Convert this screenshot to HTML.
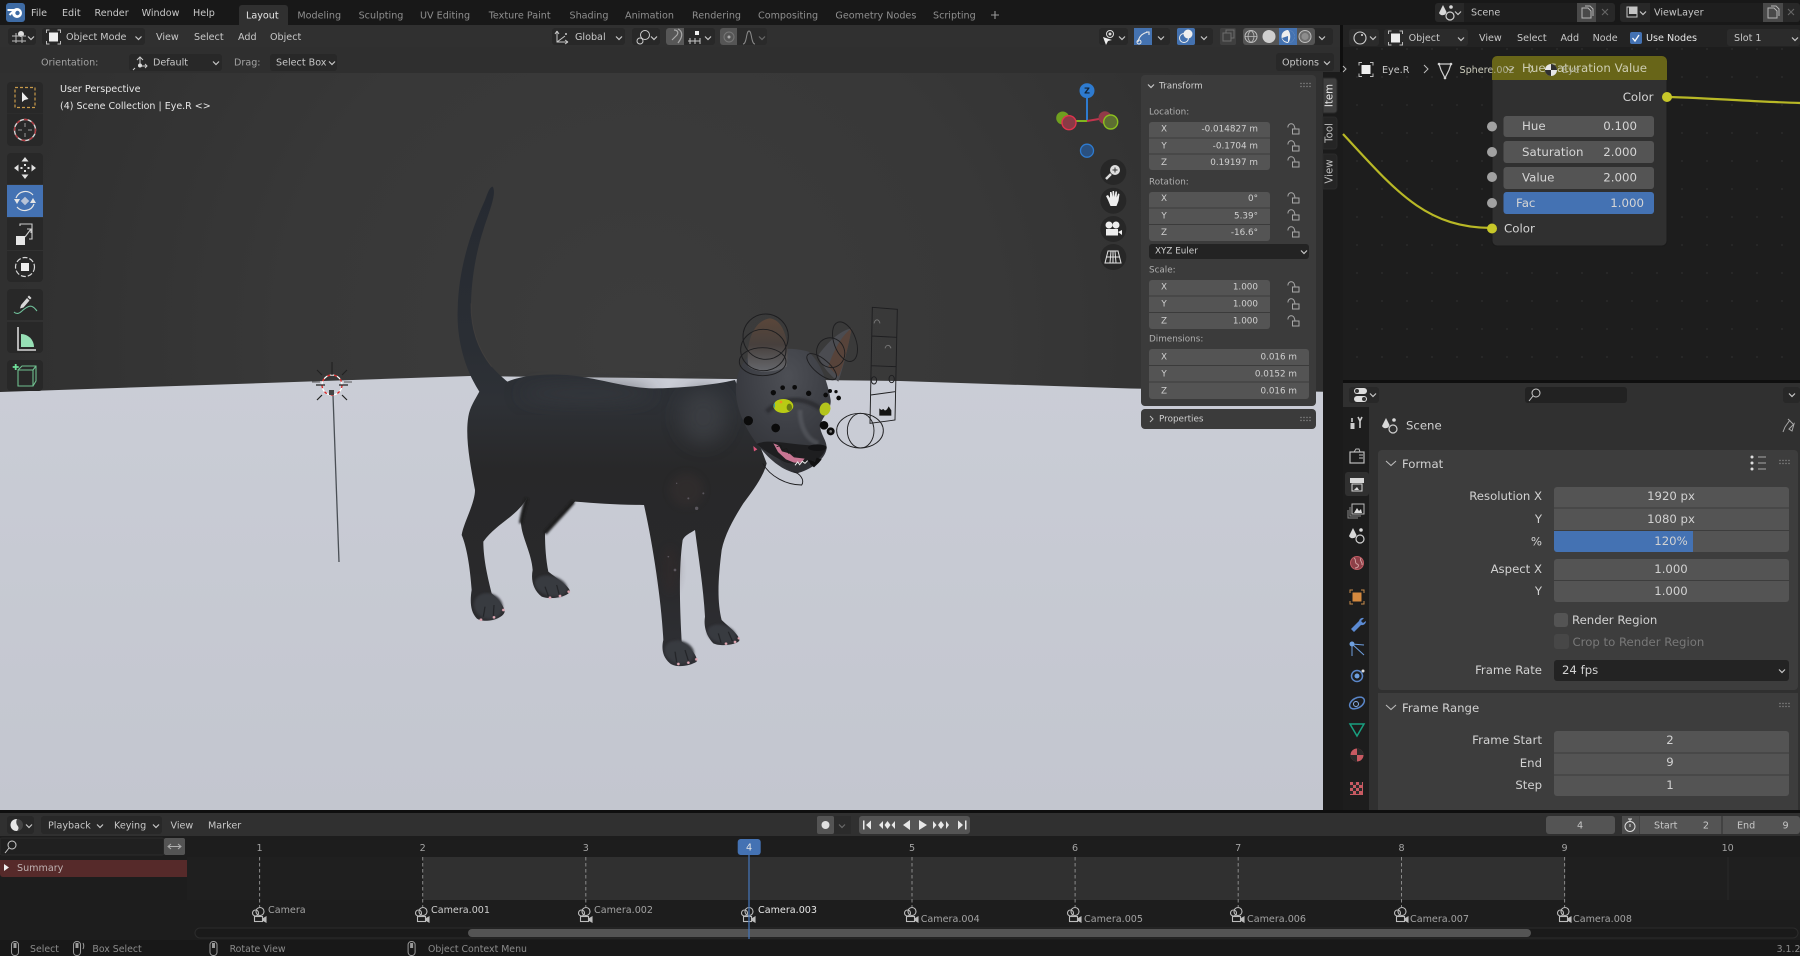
<!DOCTYPE html>
<html><head><meta charset="utf-8"><title>Blender</title>
<style>
html,body{margin:0;padding:0;background:#0f0f0f;width:1800px;height:956px;overflow:hidden}
svg{display:block;filter:blur(.35px)}
text{font-family:"DejaVu Sans","Liberation Sans",sans-serif;font-size:9.6px;fill:#c8c8c8;dominant-baseline:central;transform:translateY(.8px)}
.d{fill:#8f8f8f}.w{fill:#e6e6e6}.e{text-anchor:end}.m{text-anchor:middle}
.s{font-size:8.8px;fill:#d0d0d0}.l{font-size:8.8px;fill:#b0b0b0}
.p{font-size:11.7px;fill:#d2d2d2;transform:none}.n{font-size:11.8px;fill:#d5d5d5;transform:none}
.st{fill:#8b8b8b;font-size:9.4px}.g{fill:#a3a3a3}
</style></head><body>
<svg width="1800" height="956" viewBox="0 0 1800 956" xmlns="http://www.w3.org/2000/svg">
<defs>
<path id="ch" d="M-3 -1.5L0 1.5L3 -1.5" fill="none" stroke="#c8c8c8" stroke-width="1.2"/>
<g id="lock" fill="none" stroke="#a8a8a8" stroke-width="1"><path d="M-6 -1.5a3.2 3.2 0 0 1 6.4-1l.6 2"/><rect x="-1.5" y="0" width="6.5" height="5"/></g>
<g id="cam" fill="none" stroke="#bcbcbc" stroke-width="1.1"><circle cx="1" cy="-3.5" r="4"/><circle cx="-3.5" cy="-2" r="3"/><rect x="-4.5" y="1.5" width="8" height="5"/><path d="M3.5 4l3.500-2v5l-3.500-2" fill="#bcbcbc"/></g>
<g id="mouse" fill="none" stroke="#9a9a9a" stroke-width="1"><rect x="-3.5" y="-7" width="7" height="14" rx="3.2"/><rect x="-1" y="-5" width="2" height="4" fill="#9a9a9a"/></g>
<g id="dots" fill="#8a8a8a"><circle cx="-5" cy="-1.5" r=".7"/><circle cx="-2" cy="-1.5" r=".7"/><circle cx="1" cy="-1.5" r=".7"/><circle cx="4" cy="-1.5" r=".7"/><circle cx="-5" cy="1.5" r=".7"/><circle cx="-2" cy="1.5" r=".7"/><circle cx="1" cy="1.5" r=".7"/><circle cx="4" cy="1.5" r=".7"/></g>
<g id="obj"><path d="M-7 -4v-3h3M4 -7h3v3M7 4v3h-3M-4 7h-3v-3" fill="none" stroke="#bbb" stroke-width="1"/><rect x="-4.5" y="-4.5" width="9" height="9" fill="#eee"/></g>
<g id="scene"><path d="M-3 -8l3.500 7a4 4 0 0 1-7.500 1z" fill="#d8d8d8"/><circle cx="4" cy="3" r="4" fill="none" stroke="#d0d0d0" stroke-width="1.2"/><circle cx="5" cy="-6" r="1.8" fill="#d8d8d8"/></g>
<radialGradient id="vp" gradientUnits="userSpaceOnUse" cx="640" cy="340" r="640"><stop offset="0" stop-color="#3c3c3c"/><stop offset=".55" stop-color="#383838"/><stop offset="1" stop-color="#303030"/></radialGradient>
<linearGradient id="fl" x1="0" y1="0" x2="0" y2="1"><stop offset="0" stop-color="#cacdd6"/><stop offset="1" stop-color="#c3c6cf"/></linearGradient>
<linearGradient id="body" x1="0" y1="0" x2="0" y2="1"><stop offset="0" stop-color="#262a31"/><stop offset=".33" stop-color="#2a2e34"/><stop offset=".45" stop-color="#2e3136"/><stop offset=".59" stop-color="#282829"/><stop offset=".8" stop-color="#29292b"/><stop offset="1" stop-color="#2f3035"/></linearGradient>
<radialGradient id="head" cx=".55" cy=".22" r=".85"><stop offset="0" stop-color="#4d4f55"/><stop offset=".5" stop-color="#3d3f45"/><stop offset="1" stop-color="#2e2f33"/></radialGradient>
<linearGradient id="ear" x1="0" y1="0" x2="0" y2="1"><stop offset="0" stop-color="#5a4639"/><stop offset=".5" stop-color="#47403d"/><stop offset="1" stop-color="#66686d"/></linearGradient>
<filter id="b5" x="-80%" y="-80%" width="260%" height="260%"><feGaussianBlur stdDeviation="28"/></filter>
<filter id="b3" x="-50%" y="-50%" width="200%" height="200%"><feGaussianBlur stdDeviation="12"/></filter>
<filter id="b1" x="-30%" y="-30%" width="160%" height="160%"><feGaussianBlur stdDeviation="3"/></filter>
<pattern id="nd" x="1345" y="35" width="25" height="28" patternUnits="userSpaceOnUse"><circle cx="12" cy="14" r=".9" fill="#2e2e2e"/></pattern>
</defs>

<rect width="1800" height="956" fill="#0f0f0f"/>
<!-- top bar -->
<rect width="1800" height="25" fill="#181818"/>
<rect x="6" y="3" width="19" height="19" rx="3" fill="#3e6ba4"/>
<circle cx="17" cy="13" r="5" fill="#fff"/><circle cx="17.5" cy="13" r="2.2" fill="#3e6ba4"/><path d="M7.5 10h7l-5 5" fill="none" stroke="#fff" stroke-width="2"/>
<text x="31" y="12.5">File</text><text x="62" y="12.5">Edit</text><text x="94.5" y="12.5">Render</text><text x="141.6" y="12.5">Window</text><text x="193" y="12.5">Help</text>
<path d="M239 25v-17a3 3 0 0 1 3-3h43a3 3 0 0 1 3 3v17z" fill="#303030"/>
<text x="246" y="15" class="w">Layout</text>
<text x="297.4" y="15" class="d">Modeling</text><text x="358.6" y="15" class="d">Sculpting</text><text x="420" y="15" class="d">UV Editing</text><text x="488.7" y="15" class="d">Texture Paint</text><text x="569.5" y="15" class="d">Shading</text><text x="625" y="15" class="d">Animation</text><text x="692" y="15" class="d">Rendering</text><text x="758" y="15" class="d">Compositing</text><text x="835.4" y="15" class="d">Geometry Nodes</text><text x="933" y="15" class="d">Scripting</text>
<path d="M991 15h8M995 11v8" stroke="#999" stroke-width="1.1"/>

<!-- scene / view layer -->
<rect x="1435" y="3" width="180" height="19" rx="3" fill="#282828"/>
<rect x="1464" y="3" width="113" height="19" fill="#1e1e1e"/>
<rect x="1577" y="3" width="19" height="19" fill="#494949"/>
<use href="#scene" x="1446" y="13"/><use href="#ch" x="1458" y="13"/>
<text x="1471" y="12">Scene</text>
<path d="M1582 8h6l3 3v7h-9zM1585 6h5l3 3v7" fill="none" stroke="#b5b5b5" stroke-width="1"/>
<path d="M1602 9l6 6M1608 9l-6 6" stroke="#666" stroke-width="1.1"/>
<rect x="1620" y="3" width="180" height="19" rx="3" fill="#282828"/>
<rect x="1650" y="3" width="113" height="19" fill="#1e1e1e"/>
<rect x="1763" y="3" width="20" height="19" fill="#494949"/>
<rect x="1627" y="7" width="10" height="10" fill="none" stroke="#c5c5c5"/><rect x="1629" y="7" width="8" height="7" fill="#c5c5c5"/><use href="#ch" x="1643" y="13"/>
<text x="1654" y="12">ViewLayer</text>
<path d="M1768 8h6l3 3v7h-9zM1771 6h5l3 3v7" fill="none" stroke="#b5b5b5" stroke-width="1"/>
<path d="M1788 9l6 6M1794 9l-6 6" stroke="#666" stroke-width="1.1"/>

<!-- viewport -->
<rect x="0" y="25" width="1340" height="785" fill="url(#vp)"/>
<path d="M0 392L470 376L900 381L1130 388.500L1340 392V810H0Z" fill="url(#fl)"/>
<rect x="0" y="25" width="1340" height="22" fill="#303030"/>
<rect x="0" y="47" width="1340" height="26" fill="#2f2f2f"/>
<rect x="1323" y="72" width="20" height="738" fill="#1b1b1b"/>

<!-- header buttons -->
<g fill="#282828">
<rect x="8" y="28" width="28" height="17" rx="3"/>
<rect x="42" y="28" width="103" height="17" rx="3"/>
<rect x="552" y="28" width="73" height="17" rx="3"/>
<rect x="632" y="28" width="28" height="17" rx="3"/>
<rect x="666" y="28" width="49" height="17" rx="3"/>
<rect x="720" y="28" width="47" height="17" rx="3" fill="#2a2a2a"/>
<rect x="1099" y="28" width="29" height="17" rx="3"/>
<rect x="1134" y="28" width="36" height="17" rx="3"/>
<rect x="1177" y="28" width="36" height="17" rx="3"/>
<rect x="1243" y="28" width="90" height="17" rx="3"/>
<rect x="1276" y="53" width="58" height="18" rx="3"/>
<rect x="129" y="54" width="93" height="17" rx="3"/>
<rect x="270" y="54" width="67" height="17" rx="3"/>
</g>
<circle cx="21" cy="34" r="3" fill="#ddd"/><path d="M12 36h14M12 41h14M16 33v10M22 37v6" stroke="#bbb" stroke-width="1"/><use href="#ch" x="31" y="38"/>
<use href="#obj" x="53.500" y="37"/><text x="66" y="36.500">Object Mode</text><use href="#ch" x="138.500" y="38"/>
<text x="156" y="36.500">View</text><text x="194" y="36.500">Select</text><text x="238" y="36.500">Add</text><text x="270" y="36.500">Object</text>
<path d="M557 31v11h11M557 42l8-6M557 31l-2 3M557 31l2 3M568 42l-3-2M568 42l-3 2" fill="none" stroke="#c8c8c8" stroke-width="1"/><circle cx="566" cy="34" r="1" fill="#ccc"/>
<text x="575" y="36.500">Global</text><use href="#ch" x="619" y="38"/>
<circle cx="645" cy="35" r="4.500" fill="none" stroke="#ccc"/><circle cx="640" cy="41" r="3" fill="none" stroke="#ccc"/><use href="#ch" x="654" y="38"/>
<path d="M666 31a3 3 0 0 1 3-3h15v17h-15a3 3 0 0 1-3-3z" fill="#575757"/>
<path d="M672 40l5-5c2-3 0-5-3-5M678 43l2-3c3-5 2-9-2-11" fill="none" stroke="#a8a8a8" stroke-width="1.2"/>
<path d="M688 41h12M690 38v6M695 38v6M700 38v6" stroke="#c8c8c8" stroke-width="1"/><rect x="695" y="31" width="4" height="4" fill="#eee"/><use href="#ch" x="708" y="38"/>
<path d="M720 31a3 3 0 0 1 3-3h14v17h-14a3 3 0 0 1-3-3z" fill="#555"/><circle cx="729" cy="37" r="5" fill="none" stroke="#777"/><circle cx="729" cy="37" r="1.5" fill="#aaa"/>
<path d="M743 44c4 0 3-13 6-13s2 13 6 13" fill="none" stroke="#8b8b8b"/><use href="#ch" x="762" y="38" opacity=".4"/>
<circle cx="1110" cy="34" r="3.500" fill="none" stroke="#ddd"/><circle cx="1110" cy="34" r="1.500" fill="#ddd"/><path d="M1103 37l9 3-4 1-2 4z" fill="#eee"/><use href="#ch" x="1122" y="38"/>
<rect x="1134" y="28" width="18" height="17" fill="#4472b0"/><path d="M1138 42c1-6 5-9 10-10M1146 32h3v3" fill="none" stroke="#e8e8e8" stroke-width="1.1"/><circle cx="1139" cy="42" r="2" fill="none" stroke="#e8e8e8"/><use href="#ch" x="1161" y="38"/>
<rect x="1177" y="28" width="18" height="17" rx="2" fill="#4472b0"/><circle cx="1188" cy="34" r="4.500" fill="#eee"/><circle cx="1184" cy="38" r="4.500" fill="none" stroke="#eee"/><use href="#ch" x="1204" y="38"/>
<rect x="1220" y="28" width="16" height="17" rx="2" fill="#3f3f3f"/><path d="M1223 33h8v8h-8zM1226 33v-3h8v8h-3" fill="none" stroke="#6e6e6e"/>
<rect x="1243" y="28" width="72" height="17" rx="3" fill="#545454"/>
<circle cx="1251" cy="36.500" r="6" fill="none" stroke="#bdbdbd"/><path d="M1245 36.500h12M1251 30.500c-4 3-4 9 0 12M1251 30.500c4 3 4 9 0 12" fill="none" stroke="#bdbdbd" stroke-width=".8"/>
<circle cx="1269" cy="36.500" r="6.500" fill="#cfcfcf"/>
<rect x="1279" y="28" width="18" height="17" fill="#4472b0"/><circle cx="1288" cy="36.500" r="6.500" fill="#eee"/><path d="M1288 30a6.500 6.500 0 0 1 0 13c3-3 3-10 0-13z" fill="#4472b0"/><path d="M1282 38l6-2v6a7 7 0 0 1-6-4z" fill="#4472b0"/>
<circle cx="1305" cy="36.500" r="6" fill="#6e6e6e" stroke="#bdbdbd"/><circle cx="1305" cy="36.500" r="3.500" fill="#8d8d8d"/>
<use href="#ch" x="1322" y="38"/>
<text x="1282" y="62">Options</text><use href="#ch" x="1327" y="63"/>
<text x="41" y="62" class="g">Orientation:</text>
<path d="M140 57v9M137 60l3-3 3 3M140 66h7M133 70l2-2M145 64l2 2-2 2" fill="none" stroke="#ccc"/><circle cx="140" cy="65.500" r="2" fill="#ddd"/>
<text x="153" y="62">Default</text><use href="#ch" x="216" y="63"/>
<text x="234" y="62" class="g">Drag:</text><text x="276" y="62">Select Box</text><use href="#ch" x="332" y="63"/>

<!-- overlay text -->
<text x="60" y="88.500" class="w">User Perspective</text>
<text x="60" y="105.500" class="w" style="font-size:9.5px">(4) Scene Collection | Eye.R &lt;&gt;</text>

<!-- toolbar -->
<g fill="#282828">
<path d="M7 86a4 4 0 0 1 4-4h28a4 4 0 0 1 4 4v27.500h-36z"/>
<path d="M7 114h36v28a4 4 0 0 1-4 4h-28a4 4 0 0 1-4-4z"/>
<path d="M7 157a4 4 0 0 1 4-4h28a4 4 0 0 1 4 4v27h-36z"/>
<rect x="7" y="218" width="36" height="32"/>
<path d="M7 251h36v27a4 4 0 0 1-4 4h-28a4 4 0 0 1-4-4z"/>
<path d="M7 293a4 4 0 0 1 4-4h28a4 4 0 0 1 4 4v27h-36z"/>
<path d="M7 322h36v27a4 4 0 0 1-4 4h-28a4 4 0 0 1-4-4z"/>
<rect x="7" y="360" width="36" height="31" rx="4"/>
</g>
<rect x="7" y="185" width="36" height="32" fill="#4472b3"/>
<rect x="15" y="87.500" width="20" height="20" fill="none" stroke="#c79a4a" stroke-width="1.2" stroke-dasharray="3 2"/>
<path d="M22 92v10l2.500-2 4-1z" fill="#eee"/>
<circle cx="25" cy="130" r="10.500" fill="none" stroke="#d8d8d8" stroke-width="1.4"/><circle cx="25" cy="130" r="10.500" fill="none" stroke="#b03a40" stroke-width="1.4" stroke-dasharray="4 4"/>
<path d="M25 123v4M25 133v4M18 130h4M28 130h4" stroke="#999"/>
<g fill="#e0e0e0"><path d="M25 157l3.500 4.500h-7zM25 179l3.500-4.500h-7zM14 168l4.500-3.500v7zM36 168l-4.500-3.500v7z"/><rect x="24" y="164" width="2" height="2"/><rect x="24" y="170" width="2" height="2"/><rect x="20.500" y="167" width="2" height="2"/><rect x="27.500" y="167" width="2" height="2"/></g>
<rect x="22" y="198" width="6" height="6" fill="#b8c4d8" transform="rotate(45 25 201)"/>
<path d="M16 198a10 10 0 0 1 17-3M34 204a10 10 0 0 1-17 3" fill="none" stroke="#e6e6e6" stroke-width="1.2"/>
<path d="M14 199l3 5 3-5zM36 203l-3-5-3 5z" fill="#e6e6e6"/>
<rect x="16" y="236" width="9" height="9" fill="#e6e6e6"/><path d="M20 226v-2h12v15h-3M25 237l6-8M27 229h4v4" fill="none" stroke="#ccc" stroke-width="1.1"/>
<circle cx="25" cy="267" r="9.500" fill="none" stroke="#d8d8d8" stroke-width="1.2" stroke-dasharray="5 2"/><rect x="21" y="263" width="8" height="8" fill="#eee"/>
<path d="M21 305l6-7 2.500 2.500-6 7-3.500 1zM27.500 297l1.500-1.500 2.500 2.500-1.500 1.500z" fill="#d8d8d8"/><path d="M14 312c3 3 6 1 9-2 4-3 7-5 10-3 2 1 3 3 4 4" fill="none" stroke="#6fc09a" stroke-width="1.1"/>
<path d="M18 327v23h18" fill="none" stroke="#d8d8d8" stroke-width="1.600"/><path d="M21 347v-13a13 13 0 0 1 13 13z" fill="#97dfb5"/>
<path d="M18 370h15v16h-15zM18 370l4-4h14v15l-3 5M33 370l3-4" fill="none" stroke="#6fbf8f" stroke-width="1.100"/><path d="M15.700 364v6M12.700 367h6" stroke="#6fe09a" stroke-width="1.800"/>

<!-- empty -->
<g fill="none">
<path d="M333 395L339 562" stroke="#4a4f55" stroke-width="1.3"/>
<circle cx="332" cy="385" r="10" stroke="#fff" stroke-width="1.300"/>
<circle cx="332" cy="385" r="10" stroke="#d82020" stroke-width="1.300" stroke-dasharray="3 4"/>
<path d="M316 385h9M339 385h9M332 362v13M322 395l-5 5M342 395l5 5M322 375l-5-5M342 375l5-5" stroke="#222" stroke-width="1.200"/>
<path d="M312 382h8M344 382h8" stroke="#555"/><rect x="329" y="390" width="5" height="5" fill="#444"/>
</g>

<!-- cat -->
<g transform="translate(420 170) scale(.33333)">
<path fill="url(#body)" d="M218 50C232 70 205 130 190 180C170 240 155 320 153 400C152 480 175 540 215 590C235 612 250 625 262 635C300 618 370 610 440 615C530 622 620 655 700 655C780 655 880 645 945 630L1040 880C1030 920 1000 960 970 1000C945 1040 915 1090 905 1140C895 1220 890 1290 905 1350C925 1370 960 1395 958 1412C950 1425 900 1430 880 1420C860 1400 850 1370 855 1340C850 1250 835 1160 825 1080C810 1090 795 1095 788 1110C775 1200 780 1320 785 1415C810 1430 835 1460 830 1475C810 1488 770 1495 750 1480C725 1460 725 1430 730 1410C725 1300 700 1130 672 1005C600 1005 530 1000 465 995C440 1020 400 1060 375 1090C375 1130 378 1170 385 1205C410 1225 450 1250 450 1265C440 1282 390 1290 365 1280C340 1260 332 1230 338 1200C335 1150 305 1100 303 1060C305 1040 312 1010 320 985C290 1040 230 1060 190 1115C190 1170 205 1230 215 1270C240 1290 260 1320 252 1330C240 1350 190 1360 170 1345C150 1325 150 1290 155 1260C150 1190 140 1130 125 1095C130 1060 165 1000 165 960C150 880 135 800 145 740C150 710 165 690 178 665C130 590 110 500 113 420C115 300 150 190 195 90C203 70 208 52 218 50Z"/>
<path d="M153 400C152 480 175 540 215 590" fill="none" stroke="#4d4842" stroke-width="3" opacity=".45"/>
<ellipse cx="850" cy="740" rx="70" ry="80" fill="#3d3f45" filter="url(#b5)" opacity=".8"/>
<ellipse cx="500" cy="670" rx="200" ry="25" fill="#383b41" filter="url(#b5)" opacity=".7"/>
<ellipse cx="800" cy="960" rx="50" ry="50" fill="#3a3033" filter="url(#b3)" opacity=".4"/>
<ellipse cx="750" cy="1200" rx="25" ry="70" fill="#352c2c" filter="url(#b3)" opacity=".4"/>
<path d="M460 995C440 1020 400 1060 375 1090M320 985C310 1020 305 1040 303 1060" fill="none" stroke="#1b1c1e" stroke-width="12" filter="url(#b1)"/>
<!-- paws -->
<g fill="#393a40" filter="url(#b1)">
<ellipse cx="205" cy="1308" rx="44" ry="38" transform="rotate(20 205 1308)"/>
<ellipse cx="393" cy="1248" rx="50" ry="30" transform="rotate(15 393 1248)"/>
<ellipse cx="778" cy="1446" rx="45" ry="34" transform="rotate(15 778 1446)"/>
<ellipse cx="905" cy="1392" rx="44" ry="27" transform="rotate(15 905 1392)"/>
</g>
<g fill="none" stroke="#202124" stroke-width="3"><path d="M195 1310l-5 30M222 1305l-2 32M375 1250l10 28M410 1245l8 30M765 1445l5 32M795 1440l10 32M895 1390l8 28M925 1385l12 28"/></g>
<g fill="#dfa6b2"><circle cx="183" cy="1349" r="4"/><circle cx="222" cy="1342" r="4"/><circle cx="250" cy="1320" r="4"/><circle cx="390" cy="1283" r="4"/><circle cx="420" cy="1278" r="4"/><circle cx="446" cy="1265" r="4"/><circle cx="775" cy="1482" r="4"/><circle cx="805" cy="1478" r="4"/><circle cx="829" cy="1468" r="4"/><circle cx="918" cy="1421" r="4"/><circle cx="945" cy="1416" r="4"/><circle cx="956" cy="1405" r="3.500"/></g>
<!-- speckles -->
<g fill="#8a8490" opacity=".5"><circle cx="830" cy="1015" r="5"/><circle cx="805" cy="985" r="3"/><circle cx="850" cy="970" r="3"/><circle cx="770" cy="940" r="2"/><circle cx="765" cy="1200" r="4"/><circle cx="745" cy="1160" r="2.500"/></g>
<!-- head -->
<path fill="url(#head)" d="M948 650C950 610 965 580 985 560C1040 535 1120 530 1165 545C1195 570 1220 620 1232 690C1235 720 1205 740 1200 770C1205 800 1220 810 1220 835C1215 870 1170 900 1130 910C1080 900 1040 860 1010 820C965 760 945 700 948 650Z"/>
<!-- ears -->
<path fill="url(#ear)" d="M985 590C975 510 1005 450 1050 445C1090 450 1110 510 1100 590C1060 610 1010 610 985 590Z"/>
<path fill="#4b4c51" d="M1195 555C1220 520 1260 480 1295 475C1285 530 1270 590 1255 635C1230 615 1205 590 1195 555Z"/>
<path fill="#57433a" d="M1225 590C1240 540 1270 490 1295 475C1285 530 1270 590 1255 620Z"/>
<path d="M1040 725C1090 680 1150 680 1200 715" stroke="#25272a" stroke-width="14" fill="none" filter="url(#b1)" opacity=".7"/>
<path d="M1140 720C1140 770 1160 810 1195 820" stroke="#6a6d73" stroke-width="14" fill="none" filter="url(#b1)" opacity=".4"/>
<!-- eyes -->
<ellipse cx="1090" cy="708" rx="30" ry="21" fill="#b9cb14"/><path d="M1060 705l5-8v20z" fill="#3f9aa0"/>
<ellipse cx="1108" cy="712" rx="8" ry="11" fill="#6a7b12"/><circle cx="1083" cy="696" r="4" fill="#f09020"/>
<ellipse cx="1215" cy="717" rx="16" ry="20" fill="#b3c41c" transform="rotate(20 1215 717)"/>
<!-- mouth -->
<path fill="#1e1e20" d="M1010 822C1040 806 1100 822 1170 826L1220 828C1212 860 1190 870 1170 880L1100 880C1065 860 1035 845 1010 822Z"/>
<path fill="#2e2f33" d="M1075 865C1100 885 1130 885 1180 872C1170 890 1150 905 1130 910C1110 905 1090 885 1075 865Z"/>
<path fill="#c77592" d="M1060 820l16 6 10 18 22 6 14 12 32 4-10 12-22 0-24-10-24-22z"/>
<path fill="none" stroke="#1a1a1a" stroke-width="3" d="M1070 830l12-4 4 14 14-4 6 14 16-4 4 12"/>
<path fill="none" stroke="#e8e8e8" stroke-width="3" d="M1125 886l8-10 6 8 8-10 8 6 8-8"/>
<path fill="#d9557a" d="M1000 828l12 10-10 6z"/>
<path fill="#111" d="M1165 870l20 5 5-12 15 5-8 10-15 14-10-8z"/>
<ellipse cx="1192" cy="833" rx="28" ry="10" fill="#141416"/>
<!-- dots -->
<g fill="#0b0b0b"><circle cx="1060" cy="668" r="8"/><circle cx="1088" cy="653" r="7"/><circle cx="1124" cy="652" r="7"/><circle cx="1166" cy="670" r="8"/><circle cx="1217" cy="675" r="7"/><circle cx="1230" cy="663" r="6"/><circle cx="1248" cy="665" r="5"/><circle cx="1256" cy="684" r="7"/><circle cx="985" cy="752" r="14"/><circle cx="1067" cy="774" r="13"/><circle cx="1212" cy="766" r="13"/><circle cx="1232" cy="784" r="12"/></g>
<circle cx="1232" cy="784" r="4" fill="#777"/>
<!-- wires -->
<g fill="none" stroke="#1e1e20" stroke-width="2.800">
<circle cx="1037" cy="500" r="68"/><ellipse cx="1030" cy="540" rx="68" ry="62"/><ellipse cx="1028" cy="575" rx="70" ry="42"/>
<ellipse cx="1275" cy="515" rx="33" ry="62" transform="rotate(-20 1275 515)"/>
<ellipse cx="1232" cy="548" rx="42" ry="45" transform="rotate(-20 1232 548)"/>
<ellipse cx="1205" cy="590" rx="55" ry="22" transform="rotate(40 1205 590)"/>
<ellipse cx="1320" cy="782" rx="70" ry="52"/><ellipse cx="1322" cy="782" rx="40" ry="52"/>
<path d="M1028 880C1050 920 1100 945 1145 945C1155 930 1140 910 1120 905"/>
<path d="M1357 412L1432 418L1425 750L1350 760ZM1355 498L1430 502M1353 587L1428 590M1352 675L1425 665"/>
<path d="M1362 460c4-14 14-14 18 0M1395 535c4-12 14-12 18 0" stroke="#777"/>
<ellipse cx="1362" cy="631" rx="8" ry="11"/><ellipse cx="1415" cy="627" rx="8" ry="11"/>
</g>
<path d="M1378 715l6 5 6-3 5 5 6-4 5-9 8 12v16h-36z" fill="#141414"/>
</g>

<!-- gizmo -->
<path d="M1087 121V97" stroke="#2e7bd0" stroke-width="2"/>
<path d="M1087 121L1066 121" stroke="#7fb51e" stroke-width="2"/><path d="M1087 121L1105 118" stroke="#c2344d" stroke-width="2"/>
<circle cx="1087" cy="90.700" r="7.500" fill="#2e7bd0"/><text x="1087" y="90" class="m" style="font-size:8px;font-weight:bold;fill:#123">Z</text>
<circle cx="1087" cy="150.700" r="6.500" fill="#2a507f" stroke="#2e7bd0" stroke-width="1.300"/>
<circle cx="1062.700" cy="118" r="6.500" fill="#6f9f1f"/>
<circle cx="1069" cy="122.700" r="7" fill="#8a3a46" stroke="#e0334d" stroke-width="1.400"/>
<circle cx="1105" cy="117.700" r="6.500" fill="#933a48"/>
<circle cx="1110.700" cy="122" r="7" fill="#5d6e32" stroke="#8abf1e" stroke-width="1.400"/>

<!-- nav buttons -->
<g fill="#272727"><circle cx="1113.300" cy="172" r="13"/><circle cx="1113.300" cy="200.700" r="13"/><circle cx="1113.300" cy="229" r="13"/><circle cx="1113.300" cy="257" r="13"/></g>
<circle cx="1115" cy="170" r="5" fill="#ddd"/><path d="M1111 174l-5 5" stroke="#ddd" stroke-width="2.500"/><path d="M1115 167.500v5M1112.500 170h5" stroke="#333"/>
<path d="M1108 200l-2-4 2-1 2 3v-6h1.500l1 5v-6h1.500l.5 6 1-5.500h1.500l-.3 6 1.500-4 1.300.5-1 7-2 5h-6z" fill="#eee"/>
<circle cx="1109" cy="225" r="3.500" fill="#eee"/><circle cx="1116" cy="225" r="3.500" fill="#eee"/><rect x="1106" y="229" width="12" height="6.500" fill="#eee"/><path d="M1118 232l4-2v5z" fill="#eee"/>
<path d="M1108 251h10l3 12h-16zM1113 251v12M1106 257h14M1111 251l-1 12M1115 251l1 12" fill="none" stroke="#e4e4e4" stroke-width="1"/>

<!-- sidebar panels -->
<rect x="1141" y="75" width="175" height="331" rx="4" fill="#3b3b3b"/>
<rect x="1141" y="409" width="175" height="20" rx="4" fill="#3b3b3b"/>
<use href="#ch" x="1151" y="86"/><text x="1159" y="85.500" class="s">Transform</text><use href="#dots" x="1306" y="85"/>
<path d="M1150 416l3 3-3 3" fill="none" stroke="#bbb"/><text x="1159" y="418.500" class="s">Properties</text><use href="#dots" x="1306" y="419"/>
<g fill="#545454">
<rect x="1149" y="122" width="121" height="48" rx="3"/><rect x="1149" y="192" width="121" height="49" rx="3"/><rect x="1149" y="280" width="121" height="49" rx="3"/><rect x="1149" y="349" width="160" height="50" rx="3"/>
</g>
<path d="M1149 138h121M1149 154h121M1149 208h121M1149 224.500h121M1149 296h121M1149 312.500h121M1149 365.500h160M1149 382h160" stroke="#3b3b3b"/>
<text x="1149" y="111.500" class="l">Location:</text><text x="1149" y="181.500" class="l">Rotation:</text><text x="1149" y="269.500" class="l">Scale:</text><text x="1149" y="338.500" class="l">Dimensions:</text>
<g class="s">
<text x="1164" y="128.500" class="s m">X</text><text x="1164" y="145.500" class="s m">Y</text><text x="1164" y="162" class="s m">Z</text>
<text x="1164" y="198" class="s m">X</text><text x="1164" y="215.500" class="s m">Y</text><text x="1164" y="232" class="s m">Z</text>
<text x="1164" y="286.500" class="s m">X</text><text x="1164" y="303.500" class="s m">Y</text><text x="1164" y="320.500" class="s m">Z</text>
<text x="1164" y="356.500" class="s m">X</text><text x="1164" y="373.500" class="s m">Y</text><text x="1164" y="390.500" class="s m">Z</text>
<text x="1258" y="128.500" class="s e">-0.014827 m</text><text x="1258" y="145.500" class="s e">-0.1704 m</text><text x="1258" y="162" class="s e">0.19197 m</text>
<text x="1258" y="198" class="s e">0°</text><text x="1258" y="215.500" class="s e">5.39°</text><text x="1258" y="232" class="s e">-16.6°</text>
<text x="1258" y="286.500" class="s e">1.000</text><text x="1258" y="303.500" class="s e">1.000</text><text x="1258" y="320.500" class="s e">1.000</text>
<text x="1297" y="356.500" class="s e">0.016 m</text><text x="1297" y="373.500" class="s e">0.0152 m</text><text x="1297" y="390.500" class="s e">0.016 m</text>
</g>
<rect x="1149" y="244" width="160" height="15" rx="3" fill="#232323"/><text x="1155" y="250.500" class="s">XYZ Euler</text><use href="#ch" x="1304" y="252"/>
<use href="#lock" x="1294" y="129"/><use href="#lock" x="1294" y="146"/><use href="#lock" x="1294" y="162"/><use href="#lock" x="1294" y="198"/><use href="#lock" x="1294" y="215"/><use href="#lock" x="1294" y="232"/><use href="#lock" x="1294" y="287"/><use href="#lock" x="1294" y="304"/><use href="#lock" x="1294" y="321"/>

<!-- n tabs -->
<g fill="#3a3a3a" stroke="#2a2a2a"><path d="M1323 78h11a3 3 0 0 1 3 3v29a3 3 0 0 1-3 3h-11z" fill="#3f3f3f"/><path d="M1323 117h11a3 3 0 0 1 3 3v26a3 3 0 0 1-3 3h-11z" fill="#252525"/><path d="M1323 154h11a3 3 0 0 1 3 3v29a3 3 0 0 1-3 3h-11z" fill="#252525"/></g>
<g transform="translate(1330 95.500) rotate(-90)"><text class="m w" style="font-size:10.200px;transform:none">Item</text></g>
<g transform="translate(1330 133) rotate(-90)"><text class="m" style="font-size:10.200px;fill:#bdbdbd;transform:none">Tool</text></g>
<g transform="translate(1330 171.500) rotate(-90)"><text class="m" style="font-size:10.200px;fill:#bdbdbd;transform:none">View</text></g>

<!-- node editor -->
<rect x="1343" y="25" width="457" height="355" fill="#1d1d1d"/>
<rect x="1343" y="47" width="457" height="333" fill="url(#nd)"/>
<rect x="1343" y="25" width="457" height="22" fill="#232323"/>
<g fill="#2b2b2b">
<rect x="1349" y="29" width="30" height="17" rx="3"/><rect x="1384" y="29" width="84" height="17" rx="3"/><rect x="1727" y="29" width="73" height="17" rx="3"/>
</g>
<circle cx="1360" cy="38" r="6" fill="none" stroke="#d0d0d0" stroke-width="1.100"/><circle cx="1362" cy="35" r="1" fill="#ddd"/><use href="#ch" x="1373" y="38"/>
<use href="#obj" x="1395.500" y="38"/><text x="1408.600" y="37.500">Object</text><use href="#ch" x="1461" y="39"/>
<text x="1479" y="37.500">View</text><text x="1517" y="37.500">Select</text><text x="1560.500" y="37.500">Add</text><text x="1592.600" y="37.500">Node</text>
<rect x="1630" y="32" width="12" height="12" rx="2" fill="#4472b3"/><path d="M1632.500 38l2.500 3 4-6" fill="none" stroke="#fff" stroke-width="1.300"/>
<text x="1646" y="37.500" class="w">Use Nodes</text><text x="1734" y="37.500">Slot 1</text><use href="#ch" x="1795" y="39"/>
<!-- breadcrumbs -->
<path d="M1343 66l3 3-3 3M1424 65l4 4-4 4" fill="none" stroke="#bdbdbd" stroke-width="1"/>
<use href="#obj" x="1366" y="69.500"/><text x="1382" y="69.500">Eye.R</text>
<path d="M1439 64h12l-2 6-4 8-4-8z" fill="none" stroke="#d0d0d0" stroke-width="1.200"/>
<circle cx="1439" cy="64" r="1.300" fill="#d0d0d0"/><circle cx="1451" cy="64" r="1.300" fill="#d0d0d0"/><circle cx="1445" cy="78" r="1.300" fill="#d0d0d0"/>
<text x="1459.500" y="69.500">Sphere.002</text>
<!-- noodles -->
<path d="M1343 134C1395 190 1425 228 1492 228" fill="none" stroke="#b8b826" stroke-width="2.200"/>
<path d="M1667 97C1710 98 1760 102 1800 103" fill="none" stroke="#b8b826" stroke-width="2.200"/>
<!-- node -->
<rect x="1492" y="56" width="175" height="190" rx="5" fill="#303030" stroke="#1a1a1a"/>
<path d="M1492 80v-19a5 5 0 0 1 5-5h165a5 5 0 0 1 5 5v19z" fill="#686518"/>
<text x="1459.500" y="69.500" style="fill:#b8b8a5;opacity:.85">Sphere.002</text>
<path d="M1506 67l4 3.500 4-3.500M1530 65l3 4-3 4" fill="none" stroke="#c8c8b0"/>
<text x="1522" y="68" class="n" style="fill:#cdcdb2">Hue Saturation Value</text>
<circle cx="1551" cy="70" r="6" fill="#e6e6e6"/><path d="M1551 64a6 6 0 0 1 6 6h-6v6a6 6 0 0 1-6-6h6z" fill="#303030"/>
<text x="1562" y="69.500" style="fill:#a8a890">Eye</text>
<text x="1653.500" y="97" class="n e">Color</text>
<circle cx="1667" cy="97" r="5" fill="#c7c729"/>
<g fill="#545454"><rect x="1503.500" y="116" width="150.500" height="21" rx="3"/><rect x="1503.500" y="141" width="150.500" height="22" rx="3"/><rect x="1503.500" y="167" width="150.500" height="22" rx="3"/></g>
<rect x="1503.500" y="192" width="150.500" height="22" rx="3" fill="#4472b3"/>
<text x="1522" y="126" class="n">Hue</text><text x="1522" y="152" class="n">Saturation</text><text x="1522" y="177.500" class="n">Value</text><text x="1516" y="203" class="n w">Fac</text>
<text x="1637" y="126" class="n e">0.100</text><text x="1637" y="152" class="n e">2.000</text><text x="1637" y="177.500" class="n e">2.000</text><text x="1644" y="203" class="n e w">1.000</text>
<text x="1504" y="228.500" class="n">Color</text>
<g fill="#a1a1a1"><circle cx="1492" cy="126.500" r="5"/><circle cx="1492" cy="152" r="5"/><circle cx="1492" cy="177" r="5"/><circle cx="1492" cy="203" r="5"/></g>
<circle cx="1492" cy="228.500" r="5" fill="#c7c729"/>

<!-- properties -->
<rect x="1343" y="383" width="457" height="427" fill="#303030"/>
<rect x="1349" y="387" width="30" height="16" rx="3" fill="#282828"/>
<rect x="1354" y="388" width="13" height="6" rx="3" fill="#ddd"/><rect x="1354" y="396" width="13" height="6" rx="3" fill="#ddd"/><circle cx="1357" cy="391" r="2" fill="#333"/><circle cx="1364" cy="399" r="2" fill="#333"/><use href="#ch" x="1373" y="395"/>
<rect x="1525" y="387" width="102" height="16" rx="3" fill="#222"/>
<circle cx="1536" cy="393" r="4" fill="none" stroke="#ccc"/><path d="M1533 396l-4 5" stroke="#ccc"/>
<rect x="1783" y="387" width="17" height="16" rx="3" fill="#282828"/><use href="#ch" x="1792" y="395"/>
<rect x="1343" y="407" width="26" height="403" fill="#1d1d1d"/>
<rect x="1345" y="472" width="24" height="24" rx="3" fill="#303030"/>
<!-- tab icons -->
<path d="M1352 418v4M1362 417l-2 4v7M1358 417l2 4" stroke="#ccc" stroke-width="1.600" fill="none"/><rect x="1350.500" y="423" width="4" height="6" fill="#ccc"/>
<rect x="1350" y="452" width="14" height="11" fill="none" stroke="#bbb" stroke-width="1.200"/><path d="M1354 452l2-3h3l1 3M1359 455h4M1359 458h4" stroke="#bbb" fill="none"/>
<rect x="1350" y="478" width="14" height="5" fill="#d8d8d8"/><rect x="1352" y="484" width="10" height="7" fill="none" stroke="#d8d8d8"/><path d="M1354 490l3-3 2 3z" fill="#d8d8d8"/>
<rect x="1352" y="504" width="12" height="10" fill="none" stroke="#bbb"/><path d="M1350 507v9h11M1348 510v8h10" stroke="#888" fill="none"/><path d="M1354 513l3-5 2 3 2-2 1 4z" fill="#ddd"/>
<use href="#scene" x="1356" y="536"/>
<circle cx="1357" cy="563" r="6.500" fill="#8d4048" stroke="#c05a62"/><path d="M1354 558c3 2 0 5 3 6s1 4-2 4M1361 558c-2 3 2 4 1 7" stroke="#d0a0a0" fill="none"/>
<path d="M1350 593v-3h3M1361 590h3v3M1364 601v3h-3M1353 604h-3v-3" fill="none" stroke="#c78a4a"/><rect x="1352.500" y="592.500" width="9" height="9" fill="#d68a3f"/>
<path d="M1351 629l8-8a4 4 0 0 1 5-3l-3 3 2 2 3-2a4 4 0 0 1-5 4l-7 7z" fill="#5b8ad2"/>
<circle cx="1352" cy="644" r="2.500" fill="#6ea0e0"/><path d="M1352 644l12 1M1352 644l12 11M1352 644v12" stroke="#6ea0e0" fill="none"/>
<circle cx="1357" cy="676" r="5.500" fill="none" stroke="#5a86c8" stroke-width="1.500"/><circle cx="1357" cy="676" r="2.500" fill="#6ea0e0"/><circle cx="1363" cy="671" r="1.500" fill="#ddd"/>
<ellipse cx="1357" cy="703" rx="8" ry="5" transform="rotate(-30 1357 703)" fill="none" stroke="#5a86c8" stroke-width="1.500"/><circle cx="1356" cy="704" r="2.500" fill="none" stroke="#8ab0e8"/>
<path d="M1350 724h14l-7 12z" fill="none" stroke="#19a080" stroke-width="1.500"/>
<circle cx="1357" cy="755" r="6.500" fill="#c85a62"/><path d="M1357 748.500a6.500 6.500 0 0 1 6.500 6.500h-6.500v6.500a6.500 6.500 0 0 1-6.500-6.500h6.500z" fill="#2a2a2a"/>
<rect x="1350" y="782" width="13" height="13" fill="#c85a62"/><path d="M1350 785h3v3h-3zM1356 785h3v3h-3zM1353 788h3v3h-3zM1359 788h3v3h-3zM1350 791h3v3h-3zM1356 791h3v3h-3zM1353 782h3v3h-3zM1359 782h3v3h-3z" fill="#2a2a2a"/>

<use href="#scene" x="1389" y="426"/><text x="1406" y="425.500" class="p">Scene</text>
<path d="M1785 427l-2 5M1788 419l6 6M1785 427l5-7M1789 429l5-5-2 7z" stroke="#a8a8a8" fill="none"/>

<rect x="1378" y="450" width="420" height="240" rx="4" fill="#3d3d3d"/>
<rect x="1378" y="693" width="420" height="117" fill="#3d3d3d"/>
<path d="M1386 461l5 4.500 5-4.500" fill="none" stroke="#bbb" stroke-width="1.100"/>
<text x="1402" y="464" class="p">Format</text>
<circle cx="1752" cy="457" r="1.500" fill="#ddd"/><circle cx="1752" cy="463" r="1.500" fill="#ddd"/><circle cx="1752" cy="469" r="1.500" fill="#ddd"/><path d="M1758 457h8M1758 463h8M1758 469h8" stroke="#a8a8a8"/>
<use href="#dots" x="1785" y="462"/>
<g fill="#545454">
<rect x="1554" y="487" width="235" height="65" rx="3"/><rect x="1554" y="559" width="235" height="43" rx="3"/><rect x="1554" y="731" width="235" height="65" rx="3"/>
</g>
<path d="M1554 531h139v21h-136a3 3 0 0 1-3-3z" fill="#4472b3"/>
<path d="M1554 508h235M1554 530.500h235M1554 580.500h235M1554 753h235M1554 775h235" stroke="#3d3d3d"/>
<g>
<text x="1542" y="496" class="p e">Resolution X</text><text x="1542" y="519" class="p e">Y</text><text x="1542" y="541.500" class="p e">%</text>
<text x="1542" y="569" class="p e">Aspect X</text><text x="1542" y="591" class="p e">Y</text>
<text x="1542" y="670" class="p e">Frame Rate</text>
<text x="1671" y="496" class="p m">1920 px</text><text x="1671" y="519" class="p m">1080 px</text><text x="1671" y="541" class="p m">120%</text>
<text x="1671" y="569" class="p m">1.000</text><text x="1671" y="591" class="p m">1.000</text>
</g>
<rect x="1554" y="613" width="14" height="14" rx="3" fill="#545454"/><text x="1572" y="620" class="p">Render Region</text>
<rect x="1554" y="634" width="15" height="15" rx="3" fill="#474747"/><text x="1572.500" y="642" class="p" style="fill:#787878">Crop to Render Region</text>
<rect x="1554" y="660" width="235" height="21" rx="3" fill="#232323"/><text x="1562" y="670" class="p">24 fps</text><use href="#ch" x="1782" y="671"/>
<path d="M1386 705l5 4.500 5-4.500" fill="none" stroke="#bbb" stroke-width="1.100"/>
<text x="1402" y="708" class="p">Frame Range</text><use href="#dots" x="1785" y="705"/>
<text x="1542" y="740" class="p e" style="font-size:11.9px">Frame Start</text><text x="1542" y="763" class="p e">End</text><text x="1542" y="785" class="p e">Step</text>
<text x="1670" y="740" class="p m">2</text><text x="1670" y="762" class="p m">9</text><text x="1670" y="785" class="p m">1</text>

<!-- timeline -->
<rect x="0" y="813" width="1800" height="23" fill="#303030"/>
<rect x="0" y="836" width="1800" height="104" fill="#1d1d1d"/>
<rect x="7" y="816" width="27" height="18" rx="3" fill="#282828"/>
<circle cx="16.500" cy="825" r="6" fill="#e6e6e6"/><path d="M17 819a6 6 0 0 1 0 12c2-2 2-4 0-6-1-2-1-4 0-6z" fill="#444"/><use href="#ch" x="29" y="826"/>
<rect x="41" y="816" width="121" height="18" rx="3" fill="#282828"/>
<text x="48" y="825">Playback</text><use href="#ch" x="100" y="826"/><text x="114" y="825">Keying</text><use href="#ch" x="156" y="826"/>
<text x="170.500" y="825">View</text><text x="208" y="825">Marker</text>
<rect x="817" y="816" width="17" height="18" rx="2" fill="#545454"/><circle cx="825.500" cy="825" r="4" fill="#e0e0e0"/><rect x="834" y="816" width="17" height="18" fill="#2b2b2b"/><use href="#ch" x="842" y="826" opacity=".4"/>
<rect x="859" y="816" width="111" height="18" rx="3" fill="#545454"/>
<g fill="#e8e8e8">
<rect x="863" y="820.500" width="1.500" height="9"/><path d="M871 820.500v9l-5-4.500z"/>
<path d="M881 825l4-4v8zM886.500 825l3-4 3 4-3 4zM897 821v8l-3.500-4z" transform="translate(-2 0)"/>
<path d="M910 820v10l-7-5z"/>
<path d="M919 820v10l8-5z"/>
<path d="M938 821l3.500 4-3.500 4zM943 825l3-4 3 4-3 4zM951 821v8l3-4z" transform="translate(-5 0)"/>
<path d="M958 820.500l5 4.500-5 4.500z"/><rect x="965" y="820.500" width="1.500" height="9"/>
</g>
<rect x="1546" y="816" width="69" height="18" rx="3" fill="#545454"/><text x="1580" y="825" class="m">4</text>
<rect x="1622" y="816" width="178" height="18" rx="3" fill="#545454"/><path d="M1639 816v18M1722 816v18" stroke="#303030"/><rect x="1622" y="816" width="17" height="18" fill="#4d4d4d"/>
<circle cx="1630" cy="826.500" r="5" fill="none" stroke="#ddd"/><path d="M1630 824v3M1628 819h4M1630 819v3" stroke="#ddd"/>
<text x="1654" y="825">Start</text><text x="1709" y="825" class="e">2</text><text x="1737" y="825">End</text><text x="1788.600" y="825" class="e">9</text>

<!-- channel list -->
<rect x="0" y="838" width="164" height="17" rx="2" fill="#202020" stroke="#2b2b2b"/>
<circle cx="12" cy="845" r="4" fill="none" stroke="#ccc"/><path d="M9 848l-4 5" stroke="#ccc"/>
<rect x="164" y="838" width="21" height="17" rx="2" fill="#545454"/><path d="M169 846.500h11M171 844l-3 2.500 3 2.500M178 844l3 2.500-3 2.500" fill="none" stroke="#b0b0b0"/>
<path d="M0 860H187V877H3a3 3 0 0 1-3-3z" fill="#562a2a"/><path d="M4 864l5 3.500-5 3.500z" fill="#eee"/><text x="17" y="867.500" style="fill:#bfb3b3">Summary</text>

<!-- range -->
<rect x="423" y="857" width="1142" height="43" fill="#303030"/>
<rect x="187" y="857" width="236" height="43" fill="#1f1f1f"/>
<rect x="1565" y="857" width="235" height="43" fill="#1f1f1f"/>
<path d="M1728 857v43" stroke="#292929"/>
<g stroke="#8a8a8a" stroke-dasharray="3.500 2.500" stroke-width="1">
<path d="M259.600 857v50M422.700 857v50M585.800 857v50M912 857v50M1075.100 857v50M1238.200 857v50M1401.500 857v50M1564.600 857v50"/>
</g>
<g class="r">
<text x="259.600" y="847.500" class="m g">1</text><text x="422.700" y="847.500" class="m g">2</text><text x="585.800" y="847.500" class="m g">3</text><text x="912" y="847.500" class="m g">5</text><text x="1075.100" y="847.500" class="m g">6</text><text x="1238.200" y="847.500" class="m g">7</text><text x="1401.500" y="847.500" class="m g">8</text><text x="1564.600" y="847.500" class="m g">9</text><text x="1727.700" y="847.500" class="m g">10</text>
</g>
<use href="#cam" x="259" y="915"/><use href="#cam" x="422" y="915"/><use href="#cam" x="585" y="915"/><use href="#cam" x="748" y="915"/><use href="#cam" x="911" y="915"/><use href="#cam" x="1074" y="915"/><use href="#cam" x="1237" y="915"/><use href="#cam" x="1401" y="915"/><use href="#cam" x="1564" y="915"/>
<g>
<text x="268" y="909.500" class="g">Camera</text><text x="431" y="909.500" style="fill:#cfcfcf">Camera.001</text><text x="594" y="909.500" class="g">Camera.002</text><text x="758" y="909.500" class="w">Camera.003</text>
<text x="920.700" y="918.500" class="g">Camera.004</text><text x="1084" y="918.500" class="g">Camera.005</text><text x="1247" y="918.500" class="g">Camera.006</text><text x="1410" y="918.500" class="g">Camera.007</text><text x="1573" y="918.500" class="g">Camera.008</text>
</g>
<rect x="195" y="928" width="1603" height="10" rx="5" fill="#1a1a1a" stroke="#2c2c2c"/>
<rect x="468" y="929" width="1063" height="8" rx="4" fill="#545454"/>
<rect x="737.700" y="839" width="23" height="16" rx="3" fill="#4472b3"/><text x="749" y="847" class="m w">4</text>
<path d="M749 855V939" stroke="#4472b3" stroke-width="1.300"/>

<!-- status bar -->
<rect x="0" y="940" width="1800" height="16" fill="#181818"/>
<use href="#mouse" x="15" y="948.500"/><text x="30" y="948.500" class="st">Select</text>
<use href="#mouse" x="77" y="948.500"/><path d="M83 943c1 2 1 4 0 6" fill="none" stroke="#999"/><text x="92.400" y="948.500" class="st">Box Select</text>
<use href="#mouse" x="213.500" y="948.500"/><text x="229.600" y="948.500" class="st">Rotate View</text>
<use href="#mouse" x="411.600" y="948.500"/><text x="428" y="948.500" class="st">Object Context Menu</text>
<text x="1776.600" y="948.500" class="st">3.1.2</text>
</svg>
</body></html>
